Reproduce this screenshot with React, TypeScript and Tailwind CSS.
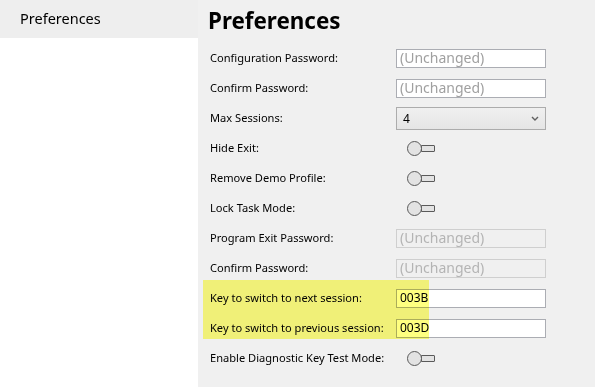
import React from 'react';

const font = { fontFamily: '"Noto Sans", "Open Sans", sans-serif' };

const TextBox: React.FC<{ value?: string; placeholder?: string; disabled?: boolean }> = ({ value, placeholder, disabled }) => (
  <div
    className={`w-[150px] h-[19px] border flex items-center px-[3px] ${
      disabled ? 'bg-[#f0f0f0] border-[#cfcfcf]' : 'bg-white border-[#abadb3]'
    }`}
  >
    {value ? (
      <span className="text-[12px] text-black leading-none">{value}</span>
    ) : (
      <span className={`text-[14px] leading-none ${disabled ? 'text-[#b4b4b4]' : 'text-[#a0a0a0]'}`}>{placeholder}</span>
    )}
  </div>
);

const Toggle: React.FC = () => (
  <div className="flex items-center ml-[11px]">
    <div className="w-[15px] h-[15px] rounded-full border border-[#5a5a5a] bg-[#e3e3e3] z-10" />
    <div className="w-[14px] h-[7px] -ml-[1px] border border-[#5a5a5a] bg-[#e3e3e3] rounded-r-[1px]" />
  </div>
);

const Row: React.FC<{ label: string; children: React.ReactNode }> = ({ label, children }) => (
  <div className="flex items-center h-[30px]">
    <div className="w-[186px] shrink-0 whitespace-nowrap text-[11.1px] text-black">{label}</div>
    {children}
  </div>
);

export default function App() {
  return (
    <div className="flex w-[595px] h-[387px] overflow-hidden" style={font}>
      <div className="w-[198px] bg-white">
        <div className="h-[38px] bg-[#eeeeee] flex items-center pl-[20px] text-[14.5px] text-black">Preferences</div>
      </div>
      <div className="flex-1 bg-[#f0f0f0] pl-[12px]">
        <div className="h-[43px] pt-[6px] -ml-[2px] text-[22.4px] font-bold text-black leading-[30px]">Preferences</div>
        <Row label="Configuration Password:">
          <TextBox placeholder="(Unchanged)" />
        </Row>
        <Row label="Confirm Password:">
          <TextBox placeholder="(Unchanged)" />
        </Row>
        <Row label="Max Sessions:">
          <div className="w-[150px] h-[23px] border border-[#acacac] bg-gradient-to-b from-[#f0f0f0] to-[#e5e5e5] flex items-center justify-between pl-[6px] pr-[6px]">
            <span className="text-[12px] text-black pt-[2px]">4</span>
            <svg width="8" height="5" viewBox="0 0 8 5">
              <path d="M1 1 L4 4 L7 1" stroke="#606060" strokeWidth="1.4" fill="none" />
            </svg>
          </div>
        </Row>
        <Row label="Hide Exit:">
          <Toggle />
        </Row>
        <Row label="Remove Demo Profile:">
          <Toggle />
        </Row>
        <Row label="Lock Task Mode:">
          <Toggle />
        </Row>
        <Row label="Program Exit Password:">
          <TextBox placeholder="(Unchanged)" disabled />
        </Row>
        <Row label="Confirm Password:">
          <TextBox placeholder="(Unchanged)" disabled />
        </Row>
        <div className="relative">
          <Row label="Key to switch to next session:">
            <TextBox value="003B" />
          </Row>
          <Row label="Key to switch to previous session:">
            <TextBox value="003D" />
          </Row>
          <div className="absolute left-[-7px] top-[-3px] w-[226px] h-[59px] bg-[#ffff80] mix-blend-multiply pointer-events-none" />
        </div>
        <Row label="Enable Diagnostic Key Test Mode:">
          <Toggle />
        </Row>
      </div>
    </div>
  );
}
